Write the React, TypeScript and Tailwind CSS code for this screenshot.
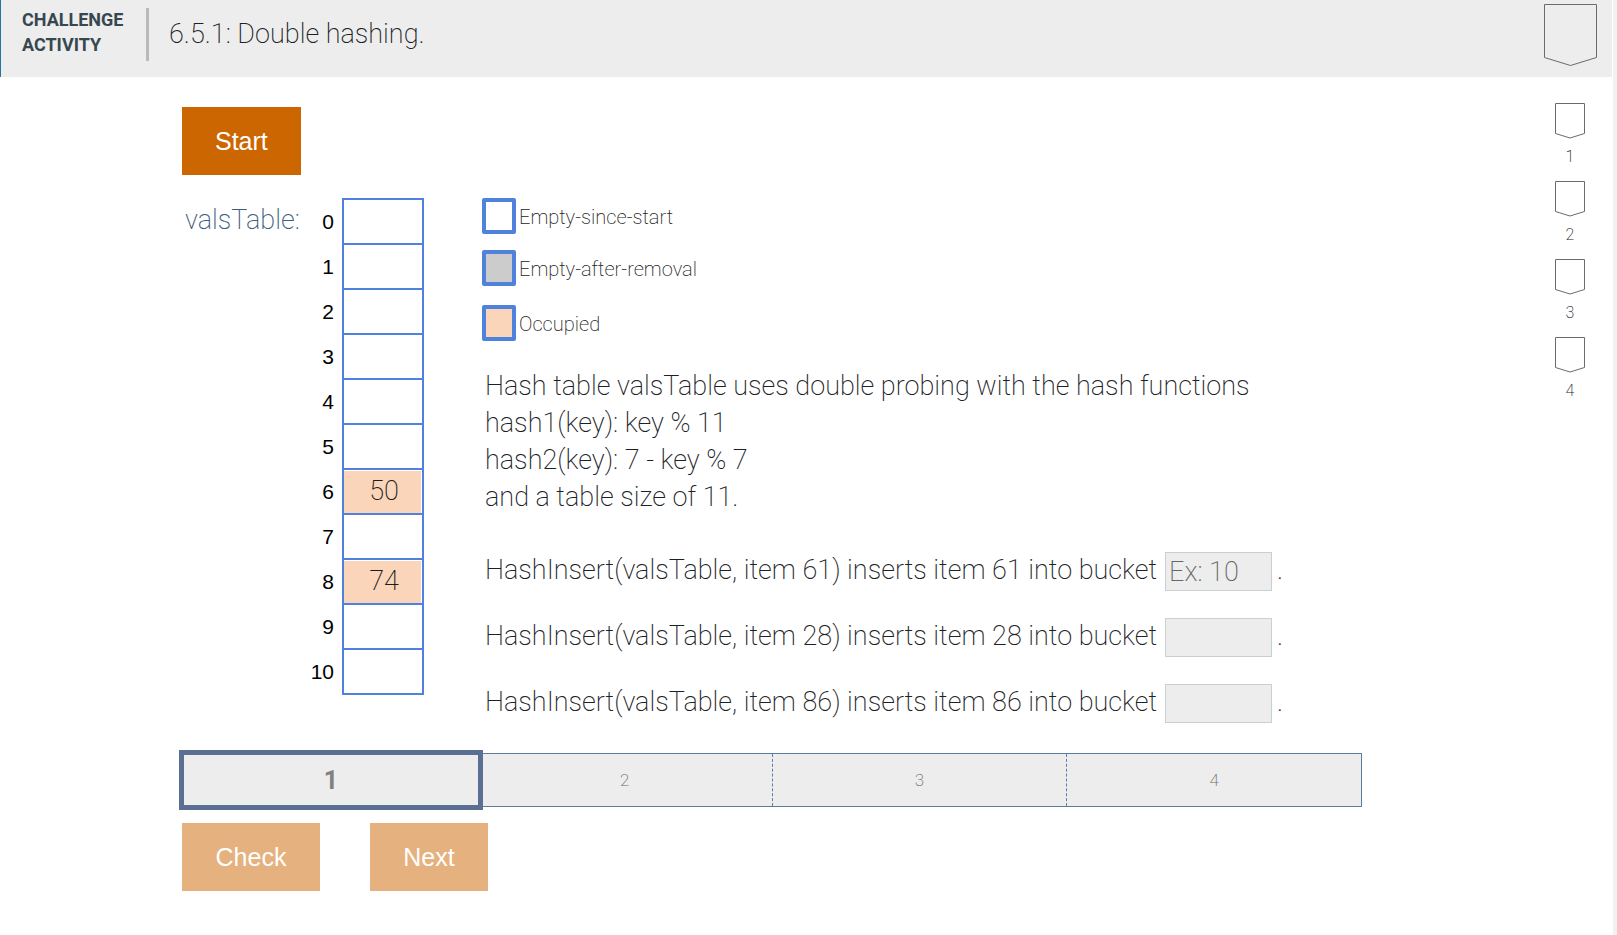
import { useState } from "react";

const buckets: (number | null)[] = [null, null, null, null, null, null, 50, null, 74, null, null];

const legend = [
  { label: "Empty-since-start", fill: "bg-white", space: "mb-4" },
  { label: "Empty-after-removal", fill: "bg-[#cccccc]", space: "mb-[19px]" },
  { label: "Occupied", fill: "bg-[#fad5ba]", space: "" },
];

const inserts = [
  { item: 61, placeholder: "Ex: 10" },
  { item: 28, placeholder: "" },
  { item: 86, placeholder: "" },
];

const levels = [1, 2, 3, 4];

function LargeShield() {
  return (
    <svg className="h-[63px] w-[54px]" viewBox="0 0 54 63" fill="none" stroke="#6b6b6b" aria-hidden="true">
      <path d="M0.5 1.5H52.5V54.5L26.5 62.5L0.5 54.5Z" strokeWidth="1" />
    </svg>
  );
}

function SmallShield() {
  return (
    <svg className="h-9 w-8" viewBox="0 0 32 36" fill="#ffffff" stroke="#6b6b6b" aria-hidden="true">
      <path d="M1.5 0.5H30.5V30.5L16 35L1.5 30.5Z" strokeWidth="1" />
    </svg>
  );
}

function HashTable() {
  return (
    <table className="border-collapse" aria-label="valsTable">
      <tbody>
        {buckets.map((value, index) => (
          <tr key={index} className="h-[45px]">
            <th
              scope="row"
              className="w-[34px] pr-2 text-right font-['Liberation_Sans',sans-serif] text-[21px] leading-6 font-normal text-black"
            >
              {index}
            </th>
            <td className="h-[45px] w-20 border-2 border-[#4f82dc] p-0 text-center text-[27px] leading-[41px] text-[#1c1c1c]">
              {value !== null && <div className="mt-px mr-px h-[42px] bg-[#fad5ba] pl-[3px]">{value}</div>}
            </td>
          </tr>
        ))}
      </tbody>
    </table>
  );
}

export default function App() {
  const [answers, setAnswers] = useState<string[]>(["", "", ""]);

  return (
    <div className="flex min-h-screen bg-white font-[Roboto,sans-serif] font-extralight text-[#1a2226]">
      <div className="min-w-0 flex-1">
        <header className="flex h-[77px] items-start border-l border-[#1f78a0] bg-[#ededed] pr-[14px] pl-[21px]">
          <div className="mt-2 w-[127px] border-r-3 border-[#b9b9b9] pb-1 text-[18px] leading-[25px] font-bold text-[#37474f]">
            <div className="-mt-px">
              CHALLENGE
              <br />
              ACTIVITY
            </div>
          </div>
          <h1 className="mt-4 ml-5 flex-1 text-[27px] leading-9">6.5.1: Double hashing.</h1>
          <div className="mt-[3px]">
            <LargeShield />
          </div>
        </header>

        <div className="flex">
          <main className="min-w-0 flex-1 pt-[30px] pr-[191px] pl-[182px]">
            <button
              type="button"
              className="block h-[68px] bg-[#cc6600] px-[33px] pt-0.5 font-['Liberation_Sans',sans-serif] text-[25px] font-normal text-white"
            >
              Start
            </button>

            <div className="mt-[23px] flex items-start">
              <div className="w-[127px] pt-1 pl-[3px] text-[27px] leading-9 text-[#3d5c7c]">valsTable:</div>
              <HashTable />

              <section className="ml-[58px] flex-1">
                <ul>
                  {legend.map((entry) => (
                    <li key={entry.label} className={`flex items-center gap-[3px] ${entry.space}`}>
                      <span className={`h-9 w-[34px] rounded-xs border-4 border-[#4f82dc] ${entry.fill}`} />
                      <span className="pt-0.5 text-[20px] leading-6 text-[#1c1c1c]">{entry.label}</span>
                    </li>
                  ))}
                </ul>

                <p className="mt-[27px] ml-[3px] text-[27px] leading-[37px]">
                  Hash table valsTable uses double probing with the hash functions
                  <br />
                  hash1(key): key % 11
                  <br />
                  hash2(key): 7 - key % 7
                  <br />
                  and a table size of 11.
                </p>

                <div className="mt-9 ml-[3px] flex flex-col gap-[27px]">
                  {inserts.map((row, index) => (
                    <div key={row.item} className="flex h-[39px] items-start text-[27px] leading-[37px]">
                      <label htmlFor={`bucket-${row.item}`}>
                        HashInsert(valsTable, item {row.item}) inserts item {row.item} into bucket
                      </label>
                      <input
                        id={`bucket-${row.item}`}
                        type="text"
                        value={answers[index]}
                        placeholder={row.placeholder}
                        onChange={(event) =>
                          setAnswers(answers.map((answer, i) => (i === index ? event.target.value : answer)))
                        }
                        className="ml-2 h-[39px] w-[107px] border border-[#c9d0d4] bg-[#ededed] px-[3px] placeholder:text-[#666666]"
                      />
                      <span className="ml-[5px]">.</span>
                    </div>
                  ))}
                </div>
              </section>
            </div>

            <ol className="mt-[30px] flex h-[54px] border border-[#5a7d9c] bg-[#ededed] text-[17px] text-[#6b6b6b]">
              {levels.map((level) =>
                level === 1 ? (
                  <li
                    key={level}
                    aria-current="step"
                    className="-my-1 -mr-[5px] -ml-1 flex flex-1 items-center justify-center border-5 border-[#5b6f93] bg-[#ededed] pt-0.5 text-[25px] font-bold text-[#808080]"
                  >
                    {level}
                  </li>
                ) : (
                  <li
                    key={level}
                    className="flex flex-1 items-center justify-center border-r border-dashed border-[#5a7db0] pt-0.5 last:border-r-0"
                  >
                    {level}
                  </li>
                ),
              )}
            </ol>

            <div className="mt-4 flex gap-[50px] pb-11 font-['Liberation_Sans',sans-serif] text-[25px] font-normal text-white">
              <button type="button" className="h-[68px] min-w-[138px] bg-[#e5b17e] px-[33px] pt-0.5">
                Check
              </button>
              <button type="button" className="h-[68px] min-w-[118px] bg-[#e5b17e] px-[33px] pt-0.5">
                Next
              </button>
            </div>
          </main>

          <aside className="flex w-[59px] flex-col items-start gap-3 pt-[26px] pl-px">
            {levels.map((level) => (
              <div key={level} className="flex flex-col items-center gap-[6px]">
                <SmallShield />
                <span className="text-[16px] leading-6">{level}</span>
              </div>
            ))}
          </aside>
        </div>
      </div>
      <div className="ml-px w-1 bg-[#f1f1f1]" />
    </div>
  );
}
